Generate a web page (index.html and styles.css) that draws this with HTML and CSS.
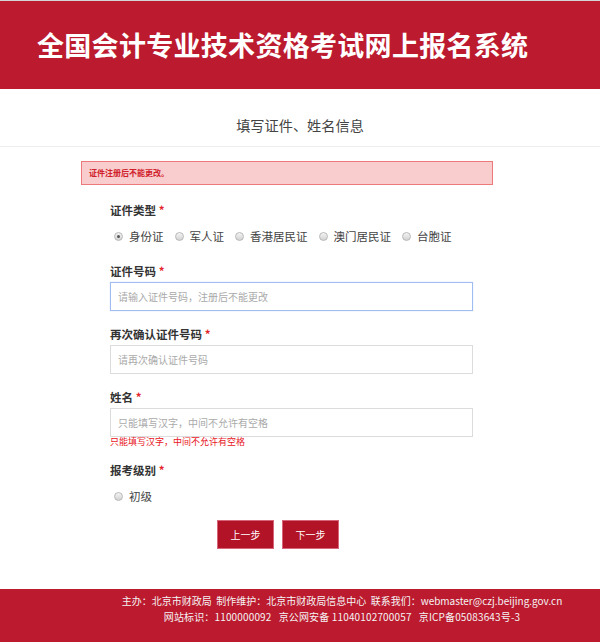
FILE: index.html
```html
<!DOCTYPE html>
<html lang="zh-CN">
<head>
  <meta charset="UTF-8">
  <title>全国会计专业技术资格考试网上报名系统</title>
  <link rel="stylesheet" href="styles.css">
</head>
<body>
  <div class="top">
    <h1>全国会计专业技术资格考试网上报名系统</h1>
  </div>

  <div class="step-title">填写证件、姓名信息</div>

  <div class="alert">证件注册后不能更改。</div>

  <form class="form">
    <div class="field">
      <label class="label">证件类型 <span class="star">*</span></label>
      <div class="radios">
        <span class="radio"><i class="dot checked"></i>身份证</span>
        <span class="radio"><i class="dot"></i>军人证</span>
        <span class="radio"><i class="dot"></i>香港居民证</span>
        <span class="radio"><i class="dot"></i>澳门居民证</span>
        <span class="radio"><i class="dot"></i>台胞证</span>
      </div>
    </div>

    <div class="field">
      <label class="label">证件号码 <span class="star">*</span></label>
      <input class="input focus" placeholder="请输入证件号码，注册后不能更改">
    </div>

    <div class="field">
      <label class="label">再次确认证件号码 <span class="star">*</span></label>
      <input class="input" placeholder="请再次确认证件号码">
    </div>

    <div class="field">
      <label class="label">姓名 <span class="star">*</span></label>
      <input class="input" placeholder="只能填写汉字，中间不允许有空格">
      <div class="error">只能填写汉字，中间不允许有空格</div>
    </div>

    <div class="field">
      <label class="label">报考级别 <span class="star">*</span></label>
      <div class="radios">
        <span class="radio"><i class="dot"></i>初级</span>
      </div>
    </div>

    <div class="buttons">
      <button type="button" class="btn">上一步</button>
      <button type="button" class="btn">下一步</button>
    </div>
  </form>

  <div class="footer">
    <p>主办：北京市财政局&nbsp; 制作维护：北京市财政局信息中心&nbsp; 联系我们：webmaster@czj.beijing.gov.cn</p>
    <p class="ids">网站标识：1100000092&nbsp;&nbsp; 京公网安备 11040102700057&nbsp;&nbsp; 京ICP备05083643号-3</p>
  </div>
</body>
</html>
```

FILE: styles.css
```css
body {
  margin: 0;
  font-family: "Noto Sans CJK SC", "Liberation Sans", sans-serif;
  color: #333;
  background: #fff;
}
.top {
  border-top: 1px solid #d4d4d4;
  background: #bc1a2e;
  height: 88px;
  padding-left: 37px;
  display: flex;
  align-items: center;
}
.top h1 {
  margin: 0;
  color: #fff;
  font-size: 27px;
  font-weight: 700;
  line-height: 30px;
  letter-spacing: 0.3px;
}
.step-title {
  padding: 26px 0 11px;
  line-height: 20px;
  text-align: center;
  font-size: 14.2px;
  color: #444;
  border-bottom: 1px solid #eee;
}
.alert {
  margin: 14px 0 0 81px;
  width: 403px;
  height: 22px;
  border: 1px solid #ec7a7a;
  background: #f9cdcd;
  color: #d0202a;
  font-size: 8px;
  font-weight: 700;
  line-height: 22px;
  padding-left: 7px;
}
.form {
  margin: 0;
  padding-left: 110px;
  width: 363px;
}
.field {
  margin-top: 15px;
}
.field:first-child {
  margin-top: 17px;
}
.label {
  display: block;
  font-size: 11.5px;
  font-weight: 700;
  line-height: 16px;
  color: #333;
}
.star {
  color: #e4262c;
}
.radios {
  display: flex;
  margin-top: 9px;
  padding-bottom: 3px;
  height: 18px;
  align-items: center;
}
.radio {
  display: flex;
  align-items: center;
  font-size: 11.5px;
  color: #444;
  margin-right: 7px;
  padding-left: 4px;
}
.dot {
  width: 7px;
  height: 7px;
  border: 1px solid #b8b8b8;
  border-radius: 50%;
  background: linear-gradient(#f4f4f4, #d2d2d2);
  margin-right: 6px;
  position: relative;
}
.dot.checked::after {
  content: "";
  position: absolute;
  left: 2px;
  top: 2px;
  width: 3px;
  height: 3px;
  border-radius: 50%;
  background: #555;
}
.input {
  display: block;
  margin-top: 3px;
  width: 100%;
  height: 29px;
  box-sizing: border-box;
  border: 1px solid #dcdcdc;
  padding: 0 7px;
  font-family: inherit;
  font-size: 10px;
  outline: none;
}
.input::placeholder {
  color: #aaa;
}
.input.focus {
  border-color: #9fbdf1;
  box-shadow: 0 0 1px #c5d7f7;
}
.error {
  color: #e8141c;
  font-size: 9px;
  line-height: 10px;
}
.buttons {
  display: flex;
  gap: 8px;
  margin-top: 12px;
  padding-left: 107px;
}
.btn {
  width: 57px;
  height: 29px;
  border: 1px solid #d6657a;
  background: #b31326;
  color: #fff;
  font-family: inherit;
  font-size: 10px;
  padding: 0;
}
.footer {
  margin-top: 40px;
  height: 53px;
  box-sizing: border-box;
  background: #bc1a2e;
  padding: 4px 0 0 84px;
  text-align: center;
  color: #f4f4f4;
  font-size: 10px;
}
.footer p {
  margin: 0;
  line-height: 16px;
}
.footer .ids {
  letter-spacing: 0.15px;
}
```
